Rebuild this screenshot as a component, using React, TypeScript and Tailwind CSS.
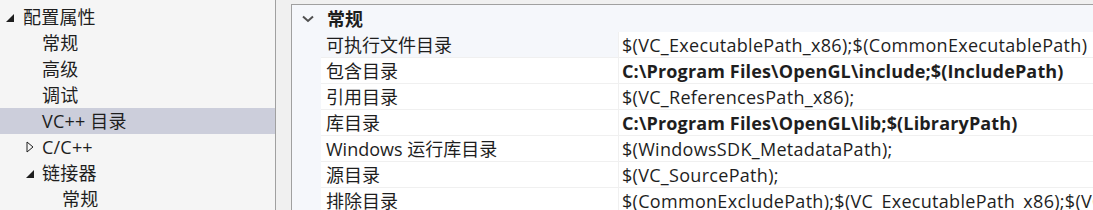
import React from "react";

const font = { fontFamily: '"Open Sans", "Noto Sans CJK SC", sans-serif' };

type TreeItem = { label: string; level: number; exp?: "open" | "closed"; selected?: boolean };

const tree: TreeItem[] = [
  { label: "配置属性", level: 0, exp: "open" },
  { label: "常规", level: 1 },
  { label: "高级", level: 1 },
  { label: "调试", level: 1 },
  { label: "VC++ 目录", level: 1, selected: true },
  { label: "C/C++", level: 1, exp: "closed" },
  { label: "链接器", level: 1, exp: "open" },
  { label: "常规", level: 2 },
];

const rows: { name: string; value: string; bold?: boolean }[] = [
  { name: "可执行文件目录", value: "$(VC_ExecutablePath_x86);$(CommonExecutablePath)" },
  { name: "包含目录", value: "C:\\Program Files\\OpenGL\\include;$(IncludePath)", bold: true },
  { name: "引用目录", value: "$(VC_ReferencesPath_x86);" },
  { name: "库目录", value: "C:\\Program Files\\OpenGL\\lib;$(LibraryPath)", bold: true },
  { name: "Windows 运行库目录", value: "$(WindowsSDK_MetadataPath);" },
  { name: "源目录", value: "$(VC_SourcePath);" },
  { name: "排除目录", value: "$(CommonExcludePath);$(VC_ExecutablePath_x86);$(VC_LibraryPath_x86)" },
];

function OpenTri() {
  return (
    <svg width="8" height="8" viewBox="0 0 8 8">
      <polygon points="8,0 8,8 0,8" fill="#1e1e1e" />
    </svg>
  );
}

function ClosedTri() {
  return (
    <svg width="8" height="12" viewBox="0 0 8 12">
      <polygon points="1,1 7,6 1,11" fill="none" stroke="#1e1e1e" strokeWidth="1" />
    </svg>
  );
}

export default function App() {
  return (
    <div className="w-[1093px] h-[210px] flex bg-[#f0f0f0] overflow-hidden text-[#1e1e1e]" style={font}>
      <div className="w-[276px] shrink-0 bg-[#f5f5f5] border-r border-[#a0a0a0] pt-[4px]">
        {tree.map((t, i) => {
          const triX = t.level === 0 ? "ml-[6px]" : "ml-[26px]";
          const textX = t.level === 0 ? "ml-[23px]" : t.level === 1 ? "ml-[42px]" : "ml-[62px]";
          return (
            <div
              key={i}
              className={`relative h-[26px] flex items-center text-[18px] ${t.selected ? "bg-[#cccedb]" : ""}`}
            >
              {t.exp && (
                <span className={`absolute left-0 top-0 h-full flex items-center ${triX} ${t.exp === "open" ? "pt-[2px]" : ""}`}>
                  {t.exp === "open" ? <OpenTri /> : <ClosedTri />}
                </span>
              )}
              <span className={`${textX} leading-none whitespace-nowrap tracking-[0.2px]`}>{t.label}</span>
            </div>
          );
        })}
      </div>
      <div className="flex-1 ml-[15px] mt-[4px] border-l border-t border-[#a0a0a0] bg-[#f5f7fb]">
        <div className="h-[27px] flex items-center">
          <span className="ml-[10px] w-[12px] flex items-center">
            <svg width="12" height="8" viewBox="0 0 12 8">
              <polyline points="1,1.5 6,6 11,1.5" fill="none" stroke="#505050" strokeWidth="2" />
            </svg>
          </span>
          <span className="ml-[13px] text-[18px] font-bold leading-none">常规</span>
        </div>
        {rows.map((r, i) => (
          <div key={i} className="h-[26px] flex">
            <div className={`ml-[29px] w-[298px] h-full flex items-center pl-[5px] border-b border-r border-[#f0f0f0] text-[18px] ${i === 0 ? "" : "bg-white"}`}>
              <span className="leading-none whitespace-nowrap">{r.name}</span>
            </div>
            <div className="flex-1 min-w-0 h-full bg-white flex items-center pl-[3px] border-b border-[#f0f0f0] overflow-hidden">
              <span className={`leading-none whitespace-nowrap text-[18px] ${r.bold ? "font-bold tracking-[0.15px]" : "tracking-[0.3px]"}`}>{r.value}</span>
            </div>
          </div>
        ))}
      </div>
    </div>
  );
}
